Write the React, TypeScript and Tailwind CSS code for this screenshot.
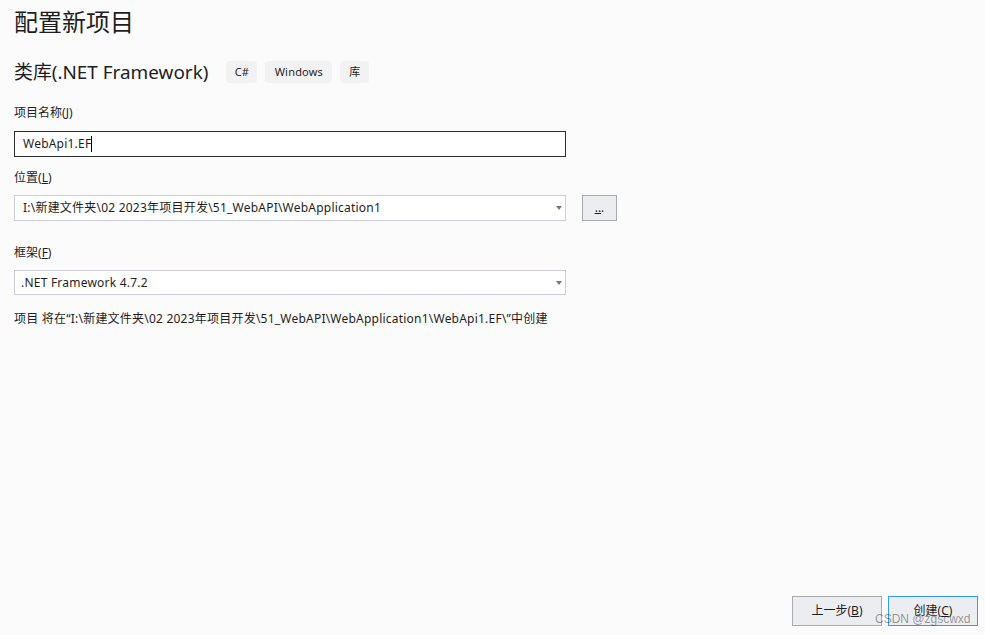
const font = "font-['Noto_Sans','Noto_Sans_CJK_SC',sans-serif]";

function Tag({ text, width }: { text: string; width: string }) {
  return <span className={`flex h-[22px] items-center justify-center rounded-[4px] bg-[#f2f2f3] text-[11px] tracking-[0.2px] text-[#1e1e1e] ${width}`}>{text}</span>;
}

function Label({ text, accessKey }: { text: string; accessKey: string }) {
  return (
    <div className="text-[12px] leading-[16px] text-[#1e1e1e]">
      {text}(<span className="underline">{accessKey}</span>)
    </div>
  );
}

function Caret() {
  return (
    <svg width="6" height="4" viewBox="0 0 6 4" className="shrink-0">
      <path d="M0 0h6L3 4z" fill="#777" />
    </svg>
  );
}

function Combo({ value, height, indent }: { value: string; height: string; indent: string }) {
  return (
    <div className={`flex w-[552px] items-center justify-between border border-[#ccced9] bg-white pr-[3px] text-[12px] tracking-[0.22px] text-[#1e1e1e] ${height} ${indent}`}>
      <span>{value}</span>
      <Caret />
    </div>
  );
}

export default function App() {
  return (
    <div className={`relative flex h-[635px] w-[985px] flex-col overflow-hidden bg-[#fbfbfc] pl-[14px] text-[#1e1e1e] ${font}`}>
      <h1 className="mt-[5px] text-[24px] leading-[34px]">配置新项目</h1>

      <div className="mt-[19px] flex h-[28px] items-center">
        <h2 className="text-[18.9px] leading-[28px]">类库(.NET Framework)</h2>
        <div className="ml-[18px] flex gap-[8px]">
          <Tag text="C#" width="w-[31px]" />
          <Tag text="Windows" width="w-[67px]" />
          <Tag text="库" width="w-[29px]" />
        </div>
      </div>

      <div className="mt-[19px]">
        <Label text="项目名称" accessKey="J" />
      </div>
      <div className="mt-[10px] flex h-[26px] w-[552px] items-center border border-[#2b2b2b] bg-white pl-[8px] text-[12px] tracking-[0.22px]">
        <span>WebApi1.EF</span>
        <span className="h-[16px] w-px bg-black" />
      </div>

      <div className="mt-[13px]">
        <Label text="位置" accessKey="L" />
      </div>
      <div className="mt-[9px] flex items-center gap-[16px]">
        <Combo value="I:\新建文件夹\02 2023年项目开发\51_WebAPI\WebApplication1" height="h-[26px]" indent="pl-[8px]" />
        <button className="flex h-[26px] w-[35px] items-center justify-center border border-[#a9a9ae] bg-[#ecedf1] text-[12px]">
          <span className="underline">..</span>.
        </button>
      </div>

      <div className="mt-[24px]">
        <Label text="框架" accessKey="F" />
      </div>
      <div className="mt-[9px]">
        <Combo value=".NET Framework 4.7.2" height="h-[25px]" indent="pl-[6px]" />
      </div>

      <p className="mt-[16px] text-[12px] leading-[16px] tracking-[0.22px]">项目 将在“I:\新建文件夹\02 2023年项目开发\51_WebAPI\WebApplication1\WebApi1.EF\”中创建</p>

      <div className="mt-auto mb-[9px] flex justify-end gap-[6px] pr-[7px]">
        <button className="h-[30px] w-[90px] border border-[#a9a9ae] bg-[#ecedf1] text-[12px]">
          上一步(<span className="underline">B</span>)
        </button>
        <button className="h-[30px] w-[90px] border border-[#3399ff] bg-[#ecedf1] text-[12px]">
          创建(<span className="underline">C</span>)
        </button>
      </div>

      <span className="absolute left-[875px] top-[612px] font-['Liberation_Sans',sans-serif] text-[12px] leading-[15px] text-[#1e1e1e]/45">CSDN @zgscwxd</span>
    </div>
  );
}
